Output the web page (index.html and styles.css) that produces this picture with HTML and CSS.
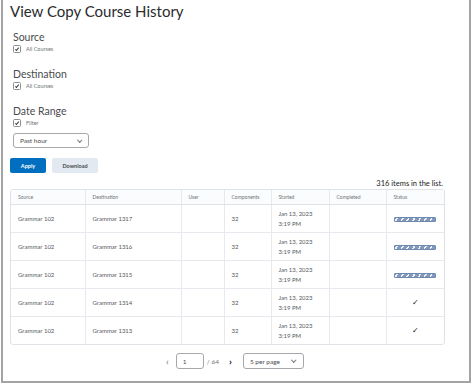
FILE: index.html
```html
<!DOCTYPE html>
<html lang="en">
<head>
    <meta charset="UTF-8">
    <title>View Copy Course History</title>
    <link rel="stylesheet" href="styles.css">
</head>
<body>
    <div class="frame">
        <h1 class="title">View Copy Course History</h1>

        <div class="filter">
            <h2>Source</h2>
            <label class="check"><span class="box"></span>All Courses</label>
        </div>
        <div class="filter">
            <h2>Destination</h2>
            <label class="check"><span class="box"></span>All Courses</label>
        </div>
        <div class="filter">
            <h2>Date Range</h2>
            <label class="check"><span class="box"></span>Filter</label>
            <div class="select range">Past hour<span class="chev"></span></div>
        </div>

        <div class="buttons">
            <button class="primary">Apply</button>
            <button class="secondary">Download</button>
        </div>

        <div class="count">316 items in the list.</div>

        <div class="table-wrap">
            <table class="history">
                <colgroup>
                    <col style="width: 74px">
                    <col style="width: 96px">
                    <col style="width: 43px">
                    <col style="width: 47px">
                    <col style="width: 58px">
                    <col style="width: 57px">
                    <col>
                </colgroup>
                <thead>
                    <tr>
                        <th>Source</th>
                        <th>Destination</th>
                        <th>User</th>
                        <th>Components</th>
                        <th>Started</th>
                        <th>Completed</th>
                        <th>Status</th>
                    </tr>
                </thead>
                <tbody id="rows">
                    <!-- filled by script below -->
                </tbody>
            </table>
        </div>

        <div class="pager">
            <span class="arrow">&lsaquo;</span>
            <span class="page-input">1</span>
            <span class="of">/ 64</span>
            <span class="arrow next">&rsaquo;</span>
            <div class="select per-page">5 per page<span class="chev"></span></div>
        </div>
    </div>

    <script>
        const history = [
            { dest: 'Grammar 1317', done: false },
            { dest: 'Grammar 1316', done: false },
            { dest: 'Grammar 1315', done: false },
            { dest: 'Grammar 1314', done: true },
            { dest: 'Grammar 1313', done: true }
        ];

        const tbody = document.getElementById('rows');
        history.forEach(item => {
            const tr = document.createElement('tr');
            tr.innerHTML = `
                <td>Grammar 102</td>
                <td>${item.dest}</td>
                <td></td>
                <td>32</td>
                <td>Jan 13, 2023<br>3:19 PM</td>
                <td></td>
                <td class="status">${item.done ? '<span class="tick">&#10003;</span>' : '<span class="progress"></span>'}</td>
            `;
            tbody.appendChild(tr);
        });
    </script>
</body>
</html>
```

FILE: styles.css
```css
body {
    margin: 0;
    background-color: #fff;
    font-family: Lato, "Open Sans", sans-serif;
    color: #494c4e;
}
.frame {
    margin-left: 1px;
    width: 459px;
    height: 381px;
    border: 2px solid #a3a3a3;
    border-top: 0;
    padding: 0 0 0 7px;
}
.title {
    margin: 0;
    padding-top: 1px;
    font-size: 15px;
    line-height: 20px;
    font-weight: 400;
    color: #2a2b2c;
}
.filter h2 {
    margin: 10px 0 0 3px;
    font-size: 10.5px;
    line-height: 12px;
    font-weight: 400;
    color: #494c4e;
}
.filter + .filter h2 {
    margin-top: 14px;
}
.check {
    display: flex;
    align-items: center;
    gap: 5px;
    margin-left: 3px;
    height: 10px;
    margin-top: 1px;
    font-size: 5.5px;
    color: #6e7376;
}
.box {
    width: 6px;
    height: 6px;
    border: 1px solid #8a8f93;
    border-radius: 1.5px;
    position: relative;
}
.box::after {
    content: "";
    position: absolute;
    left: 1.8px;
    top: 0.6px;
    width: 1.4px;
    height: 3px;
    border: solid #33373a;
    border-width: 0 0.8px 0.8px 0;
    transform: rotate(40deg);
}
.select {
    display: flex;
    align-items: center;
    justify-content: space-between;
    box-sizing: border-box;
    height: 15px;
    border: 1px solid #a5a9ad;
    border-radius: 3px;
    font-size: 6.5px;
    color: #494c4e;
    padding: 0 7px 0 6px;
}
.range {
    width: 76px;
    margin: 5px 0 0 3px;
}
.chev {
    width: 2.5px;
    height: 2.5px;
    border: solid #6e7376;
    border-width: 0 1px 1px 0;
    transform: rotate(45deg);
    margin-top: -2px;
}
.buttons {
    display: flex;
    gap: 6px;
    margin-top: 10px;
}
.buttons button {
    height: 15px;
    border: none;
    border-radius: 2px;
    font-family: inherit;
    font-size: 5.5px;
    font-weight: 700;
    padding: 0;
}
.primary {
    width: 36px;
    background-color: #006fbf;
    color: #fff;
}
.secondary {
    width: 46px;
    background-color: #e3e9f1;
    color: #494c4e;
}
.count {
    text-align: right;
    width: 433px;
    margin-top: 6px;
    font-size: 7.5px;
    line-height: 10px;
    color: #202122;
}
.table-wrap {
    width: 433px;
    margin-top: 0;
    border: 1px solid #dfe3e8;
    border-radius: 3px;
    overflow: hidden;
}
.history {
    width: 100%;
    table-layout: fixed;
    border-collapse: collapse;
}
.history th {
    height: 14px;
    padding: 0 0 0 7px;
    text-align: left;
    font-size: 5px;
    font-weight: 400;
    color: #6e7376;
    background-color: #fbfcfd;
    border-bottom: 1px solid #dfe3e8;
    border-left: 1px solid #e6e9ed;
}
.history td {
    height: 27px;
    padding: 0 0 0 7px;
    font-size: 6px;
    line-height: 9.5px;
    color: #565a5c;
    border-top: 1px solid #e6e9ed;
    border-left: 1px solid #e6e9ed;
}
.history th:first-child,
.history td:first-child {
    border-left: 0;
}
.history td.status {
    padding: 0;
    text-align: center;
}
.progress {
    display: inline-block;
    box-sizing: border-box;
    width: 42px;
    height: 5px;
    vertical-align: middle;
    border: 0.5px solid #6f88ad;
    border-radius: 1px;
    background: repeating-linear-gradient(-60deg, #8299bb 0 3.5px, #eef2f8 3.5px 5px);
}
.tick {
    font-size: 8px;
    color: #202122;
}
.pager {
    display: flex;
    align-items: center;
    margin: 8px 0 0 156px;
    font-size: 6.5px;
    color: #6e7376;
}
.arrow {
    font-size: 10px;
    color: #6e7376;
    margin-top: -1px;
}
.next {
    color: #202122;
    font-weight: 700;
    margin-left: 10px;
}
.page-input {
    box-sizing: border-box;
    width: 28px;
    height: 16px;
    margin-left: 7px;
    padding: 4px 0 0 6px;
    border: 1px solid #a5a9ad;
    border-radius: 3px;
    color: #494c4e;
}
.of {
    margin-left: 3px;
}
.per-page {
    width: 61px;
    height: 16px;
    margin-left: 11px;
    color: #494c4e;
}
```
